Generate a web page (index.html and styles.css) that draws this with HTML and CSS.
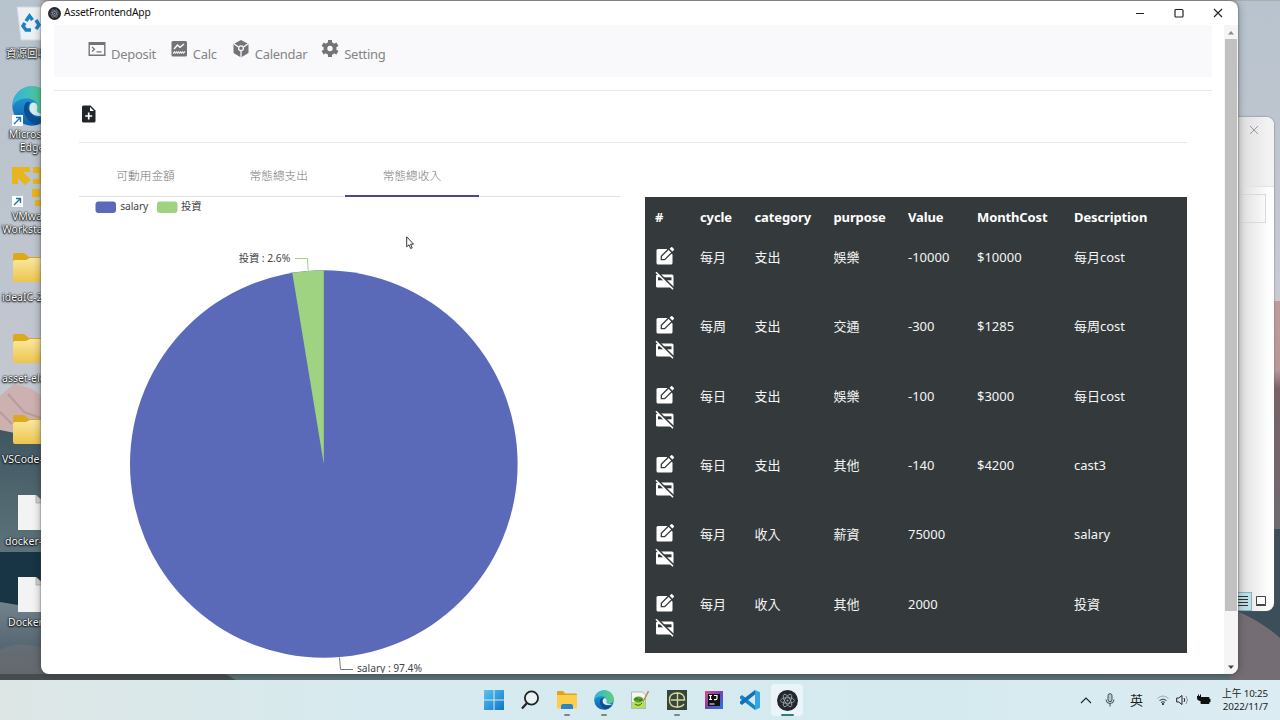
FILE: index.html
```html
<!DOCTYPE html>
<html lang="zh-Hant">
<head>
  <meta charset="UTF-8">
  <meta name="viewport" content="width=device-width, initial-scale=1.0">
  <title>AssetFrontendApp</title>
  <link rel="stylesheet" href="styles.css">
</head>
<body>
  <!-- shared icons -->
  <svg class="defs" width="0" height="0">
    <defs>
      <linearGradient id="folderFill" x1="0" y1="0" x2="0" y2="1"><stop offset="0" stop-color="#fbe7a0"/><stop offset="1" stop-color="#ecc54b"/></linearGradient>
      <linearGradient id="edgeBlue" x1="0" y1="0" x2="0" y2="1"><stop offset="0" stop-color="#2aa6dc"/><stop offset="1" stop-color="#0d5fae"/></linearGradient>
      <linearGradient id="edgeGreen" x1="0" y1="0" x2="1" y2="0"><stop offset="0" stop-color="#2fb4dc"/><stop offset="1" stop-color="#5ed07a"/></linearGradient>
      <linearGradient id="winFill" x1="0" y1="0" x2="1" y2="1"><stop offset="0" stop-color="#5bc4f2"/><stop offset="1" stop-color="#1173c6"/></linearGradient>
      <linearGradient id="ijFill" x1="0" y1="0" x2="1" y2="1"><stop offset="0" stop-color="#e84a7d"/><stop offset=".45" stop-color="#7a3fb8"/><stop offset="1" stop-color="#1f7ae0"/></linearGradient>
    </defs>
    <symbol id="edit" viewBox="0 0 20 20">
      <path fill="#fff" d="M3 3h12l2.500 4v10q0 1.500-1.500 1.500H3q-1.500 0-1.500-1.500V4.500Q1.500 3 3 3z"/>
      <path fill="#343a3c" d="M14.300 1 19.500 6.500 17.500 8.500 12 3z"/>
      <path fill="#fff" stroke="#343a3c" stroke-width="1.300" d="M6.300 13.600V10.300L13.600 3 17 6.400 9.700 13.600z"/>
      <path fill="#fff" d="m14.600 2.700 1.500-1.500q.6-.5 1.200 0L18.900 2.900q.5.600 0 1.200L17.400 5.600z"/>
    </symbol>
    <symbol id="card-off" viewBox="0 0 20 20">
      <path fill="#fff" d="M2.500 3.500h14.500q1.500 0 1.500 1.500v10.500q0 1-1 1h-15q-1.500 0-1.500-1.500V5q0-1.500 1.500-1.500z"/>
      <path fill="#343a3c" d="M3 6.300h13.500v3H3z"/>
      <path stroke="#343a3c" stroke-width="1.800" d="M2.500.800 19.800 18"/>
      <path stroke="#fff" stroke-width="1.600" d="M1 1.300 18 18.300"/>
    </symbol>
    <symbol id="folder" viewBox="0 0 36 29">
      <path fill="#dca91c" d="M0 2q0-2 2-2h9l5 4h18q2 0 2 2v10H0z"/>
      <path fill="url(#folderFill)" d="M0 9q0-2 2-2h11l4-2h17q2 0 2 2v20q0 2-2 2H2q-2 0-2-2z"/>
    </symbol>
    <symbol id="edge" viewBox="0 0 24 24">
      <circle cx="12" cy="12" r="11.800" fill="url(#edgeBlue)"/>
      <path fill="url(#edgeGreen)" d="M1 8C4 1 10 0 13 .200c7 .600 11 6 10.800 11.300-.3 4-4 5.500-7.600 4.900-2-.4-1.800-1.400-1.200-2.600C16 9 12 7.500 9 7.500 5 7.400 2 9 .500 12z"/>
      <path fill="#0c4f91" d="M9 9.500c-3.500 3-2 11 5 13.800 3-.5 6-2 8-5.300-4 2-9 1-11-2-1.400-2-1.500-4.500 0-6.400z"/>
      <path fill="#d9ecf0" d="M14.500 10.500c-3-2-5 2-3.500 5 2 3 7 3.300 11.700 1-3 .6-6 .3-7.300-.8-1.200-1.200.8-2.500-.9-5.200z"/>
    </symbol>
    <symbol id="electron" viewBox="0 0 24 24">
      <circle cx="12" cy="12" r="12" fill="#25272e"/>
      <g fill="none" stroke="#9aa6ad" stroke-width="1">
        <ellipse cx="12" cy="12" rx="8" ry="3.200"/>
        <ellipse cx="12" cy="12" rx="8" ry="3.200" transform="rotate(60 12 12)"/>
        <ellipse cx="12" cy="12" rx="8" ry="3.200" transform="rotate(120 12 12)"/>
      </g>
      <circle cx="12" cy="12" r="1.200" fill="#9aa6ad"/>
    </symbol>
    <symbol id="shortcut" viewBox="0 0 11 11">
      <path fill="#fff" d="M0 0h11v11H0z"/>
      <path fill="none" stroke="#1d75ad" stroke-width="1.400" d="m2 9 6-6M4 2.500h4.500V7"/>
    </symbol>
    <symbol id="page" viewBox="0 0 28 35">
      <path fill="#f3f3f3" d="M0 0h18l10 10v25H0z"/>
      <path fill="#d4d4d4" stroke="#999" stroke-width=".6" d="M18 0v8h9z"/>
    </symbol>
  </svg>

  <div class="desktop">
    <svg class="wallpaper" viewBox="0 0 1280 720" preserveAspectRatio="none">
      <defs>
        <linearGradient id="sky" x1="0" y1="0" x2="0" y2="1"><stop offset="0" stop-color="#b7c3cd"/><stop offset=".6" stop-color="#c1c6cf"/><stop offset="1" stop-color="#c9ccd3"/></linearGradient>
        <linearGradient id="rock" x1="0" y1="0" x2="0" y2="1"><stop offset="0" stop-color="#c09b9e"/><stop offset=".3" stop-color="#b79799"/><stop offset=".38" stop-color="#7a6265"/><stop offset="1" stop-color="#6d6a72"/></linearGradient>
        <linearGradient id="sea" x1="0" y1="0" x2="0" y2="1"><stop offset="0" stop-color="#405762"/><stop offset="1" stop-color="#5e757c"/></linearGradient>
        <linearGradient id="shore" x1="0" y1="0" x2="0" y2="1"><stop offset="0" stop-color="#73838b"/><stop offset=".5" stop-color="#596a76"/><stop offset="1" stop-color="#575a5f"/></linearGradient>
      </defs>
      <rect width="1280" height="720" fill="#5c7275"/>
      <rect width="60" height="560" fill="url(#sky)"/>
      <path fill="#cdb0b0" d="M0 396 14 384 30 388 60 408V450H0z"/>
      <path stroke="#b89b9d" stroke-width="2" fill="none" d="M8 394 24 412 41 418M0 412 12 424"/>
      <path fill="url(#sea)" d="M0 430 60 442V560H0z"/>
      <rect y="552" width="60" height="55" fill="#173545"/>
      <path fill="url(#shore)" d="M0 602 18 605 60 603V680H0z"/>
      <path fill="#707377" d="M0 650Q20 638 60 654V680H0z" opacity=".5"/>
      <rect x="1230" width="50" height="310" fill="url(#sky)"/>
      <rect x="1230" y="301" width="50" height="230" fill="url(#rock)"/>
      <rect x="1230" y="529" width="50" height="151" fill="#3c4e59"/>
      <path fill="#746e74" d="M1230 608Q1260 620 1280 638V680H1230z"/>
      <rect width="1280" height="1" x="40" fill="#adadad"/>
      <path fill="#474d4f" d="M0 674H225L236 680H0z"/>
    </svg>

    <!-- desktop shortcuts, partly behind the window -->
    <div class="shortcuts">
      <div class="shortcut bin">
        <svg width="30" height="36" viewBox="0 0 30 36"><path fill="#eef1f3" stroke="#d4d9dd" d="M1 1h28l-4 33H5z"/><path fill="none" stroke="#1b83c9" stroke-width="3.500" d="m10 15 3.500-5 3 4M20 14l3 5-3 4M15 24H10l-3-4 2-3"/></svg>
        <span>資源回收筒</span>
      </div>
      <div class="shortcut ms">
        <svg width="40" height="40"><use href="#edge"/></svg>
        <svg class="arrow" width="11" height="11"><use href="#shortcut"/></svg>
        <span>Microsoft<br>Edge</span>
      </div>
      <div class="shortcut vm">
        <svg width="40" height="40" viewBox="0 0 40 40"><path fill="#e9b51c" d="M0 0h18v5h-7l8 8-6 5-7-7v6H0zM21 0h19v6h-8v11H21v-5h6V6h-6zM20 22h8v8h-8zM23 33h15v6H23z"/></svg>
        <svg class="arrow" width="11" height="11"><use href="#shortcut"/></svg>
        <span>VMware<br>Workstation</span>
      </div>
      <div class="shortcut f1"><svg width="36" height="29"><use href="#folder"/></svg><span>ideaIC-2022</span></div>
      <div class="shortcut f2"><svg width="36" height="29"><use href="#folder"/></svg><span>asset-elec</span></div>
      <div class="shortcut f3"><svg width="36" height="29"><use href="#folder"/></svg><span>VSCode-win</span></div>
      <div class="shortcut p1"><svg width="28" height="35"><use href="#page"/></svg><span>docker-co</span></div>
      <div class="shortcut p2"><svg width="28" height="35"><use href="#page"/></svg><span>Dockerfile</span></div>
    </div>

    <div class="back-window">
      <div class="back-head"><svg width="10" height="10" viewBox="0 0 10 10"><path stroke="#999" d="m1 1 8 8M9 1 1 9"/></svg></div>
      <div class="back-body"><div class="back-field"></div></div>
      <div class="back-views">
        <span class="view-list"><svg width="10" height="10" viewBox="0 0 10 10"><path stroke="#333" d="M0 .500h10M0 3.500h10M0 6.500h10M0 9.500h10"/></svg></span>
        <svg width="10" height="10" viewBox="0 0 10 10"><path fill="#fff" stroke="#444" d="M.500.500h9v8h-9zM0 9.500h10"/></svg>
      </div>
    </div>

    <div class="window">
      <div class="titlebar">
        <svg width="13" height="13"><use href="#electron"/></svg>
        <span class="title">AssetFrontendApp</span>
        <div class="controls">
          <svg width="10" height="10" viewBox="0 0 10 10"><path stroke="#222" d="M1 5.500h8"/></svg>
          <svg width="10" height="10" viewBox="0 0 10 10"><rect x="1" y="1.500" width="8" height="7.500" rx="1" fill="none" stroke="#222" stroke-width="1.200"/></svg>
          <svg width="10" height="10" viewBox="0 0 10 10"><path stroke="#222" stroke-width="1.100" d="m1 1 8 8M9 1 1 9"/></svg>
        </div>
      </div>

      <div class="viewport">
        <div class="page">
          <nav class="navbar">
            <a class="nav-deposit"><svg width="20" height="20" viewBox="0 0 20 20"><path fill="none" stroke="#747476" stroke-width="1.400" d="M2.200 3.700h15.600v12.600H2.200z"/><path fill="#747476" d="M2 3h16v3H2z"/><path fill="none" stroke="#747476" stroke-width="1.300" d="m5 8 2.500 2.300L5 12.600M9.500 12.800h5"/></svg>Deposit</a>
            <a class="nav-calc"><svg width="20" height="20" viewBox="0 0 20 20"><rect x="2.500" y="2" width="15.500" height="15.500" rx="1.500" fill="#747476"/><path fill="none" stroke="#f9f9fc" stroke-width="1.500" d="m5 10 3.500-4 2.500 2.300 4-3.300"/><path fill="none" stroke="#f9f9fc" stroke-width="1.100" d="m4 14.500 2-2m0 2 2-2m0 2 2-2m0 2 2-2m0 2 2-2m0 2 2-2"/></svg>Calc</a>
            <a class="nav-cal"><svg width="20" height="20" viewBox="0 0 20 20"><path fill="#747476" d="m10 1 7.500 4v9L10 18.500 2.500 14V5z"/><path fill="none" stroke="#f9f9fc" stroke-width="1.300" d="M2.500 4.500 7.500 8M17.500 4.500l-5 3.500M10 12v6.500"/><circle cx="10" cy="9.300" r="2.400" fill="#747476" stroke="#f9f9fc" stroke-width="1.300"/></svg>Calendar</a>
            <a class="nav-set"><svg width="20" height="20" viewBox="0 0 20 20"><circle cx="10" cy="9.500" r="4.600" fill="none" stroke="#747476" stroke-width="3.800"/><path stroke="#747476" stroke-width="4" d="M10 1v3.500M10 14.500V18M2.600 5.200l3 1.800M14.400 12l3 1.800M2.600 13.800l3-1.800M14.400 7l3-1.800"/></svg>Setting</a>
          </nav>
          <hr class="rule">
          <main class="content">
            <div class="toolbar">
              <svg width="20" height="20" viewBox="0 0 20 20"><path fill="#212529" d="M4.500 1.500H11.500L16.500 6.500V17q0 1.500-1.500 1.500H4.500Q3 18.500 3 17V3q0-1.500 1.500-1.500z"/><path fill="#fff" d="M11 3v4h4z"/><path stroke="#fff" stroke-width="1.700" d="M9.700 8.500v7M6.200 12h7"/></svg>
            </div>
            <hr class="rule">
            <div class="columns">
              <section class="chart-col">
                <div class="tabs">
                  <div class="tab">可動用金額</div>
                  <div class="tab">常態總支出</div>
                  <div class="tab active">常態總收入</div>
                </div>
                <svg class="chart" width="541" height="476" viewBox="0 0 541 476">
                  <rect x="16.500" y="4.500" width="20.500" height="11.500" rx="3" fill="#5a69b8"/>
                  <text x="41.300" y="13" textLength="28">salary</text>
                  <rect x="78" y="4.500" width="20.500" height="11.500" rx="3" fill="#9fd382"/>
                  <text x="102" y="13">投資</text>
                  <circle cx="244.800" cy="267" r="193.800" fill="#5a69b8"/>
                  <path fill="#9fd382" d="M244.800 267 213.300 75.800A193.800 193.800 0 0 1 244.800 73.200z"/>
                  <path fill="none" stroke="#9fd382" d="M216 61.500H228.500L229.200 74"/>
                  <text x="159.700" y="64.500" textLength="51.500">投資 : 2.6%</text>
                  <path fill="none" stroke="#70777d" d="M260.500 460.500 261.500 472.500H274"/>
                  <text x="278" y="474.500" textLength="65">salary : 97.4%</text>
                </svg>
              </section>

              <table class="assets">
                <thead>
                  <tr><th class="c-icon">#</th><th class="c-cycle">cycle</th><th class="c-cat">category</th><th class="c-purpose">purpose</th><th class="c-value">Value</th><th class="c-cost">MonthCost</th><th>Description</th></tr>
                </thead>
                <tbody>
                  <tr><td><svg><use href="#edit"/></svg><svg><use href="#card-off"/></svg></td><td>每月</td><td>支出</td><td>娛樂</td><td>-10000</td><td>$10000</td><td>每月cost</td></tr>
                  <tr><td><svg><use href="#edit"/></svg><svg><use href="#card-off"/></svg></td><td>每周</td><td>支出</td><td>交通</td><td>-300</td><td>$1285</td><td>每周cost</td></tr>
                  <tr><td><svg><use href="#edit"/></svg><svg><use href="#card-off"/></svg></td><td>每日</td><td>支出</td><td>娛樂</td><td>-100</td><td>$3000</td><td>每日cost</td></tr>
                  <tr><td><svg><use href="#edit"/></svg><svg><use href="#card-off"/></svg></td><td>每日</td><td>支出</td><td>其他</td><td>-140</td><td>$4200</td><td>cast3</td></tr>
                  <tr><td><svg><use href="#edit"/></svg><svg><use href="#card-off"/></svg></td><td>每月</td><td>收入</td><td>薪資</td><td>75000</td><td></td><td>salary</td></tr>
                  <tr><td><svg><use href="#edit"/></svg><svg><use href="#card-off"/></svg></td><td>每月</td><td>收入</td><td>其他</td><td>2000</td><td></td><td>投資</td></tr>
                </tbody>
              </table>
            </div>
          </main>
        </div>
        <div class="scrollbar">
          <svg width="8" height="14" viewBox="0 0 8 14"><path fill="#8a8a8a" d="M1 9.500 4 6l3 3.500z"/></svg>
          <div class="thumb"></div>
          <svg width="8" height="14" viewBox="0 0 8 14"><path fill="#444" d="M1 5.500h6L4 9z"/></svg>
        </div>
      </div>
    </div>

    <svg class="cursor" width="9" height="14" viewBox="0 0 9 14"><path fill="#fff" stroke="#222" stroke-width=".9" d="M.700.800v10l2.300-2 1.700 3.700 1.500-.7L4.600 8.200h3z"/></svg>

    <div class="taskbar">
      <div class="apps">
        <div class="app"><svg width="20" height="20" viewBox="0 0 20 20"><path fill="url(#winFill)" d="M0 0h9.500v9.500H0zM10.500 0H20v9.500h-9.500zM0 10.500h9.500V20H0zM10.500 10.500H20V20h-9.500z"/></svg></div>
        <div class="app"><svg width="20" height="20" viewBox="0 0 20 20"><circle cx="11.500" cy="8" r="6.600" fill="#e9f3f5" stroke="#222" stroke-width="1.800"/><path stroke="#222" stroke-width="2.200" d="m7 13-5 5.500"/></svg></div>
        <div class="app open"><svg width="20" height="20" viewBox="0 0 20 20"><path fill="#dfa31c" d="M0 2q0-1 1-1h5l2 2.500h11q1 0 1 1V12H0z"/><path fill="#fbcf4c" d="M0 5h20v12.500q0 1-1 1H1q-1 0-1-1z"/><path fill="#2a86c8" d="M4 19v-3q0-2 2-2h8q2 0 2 2v3z"/></svg></div>
        <div class="app open"><svg width="20" height="20"><use href="#edge"/></svg></div>
        <div class="app"><svg width="20" height="20" viewBox="0 0 20 20"><path fill="#f5f8f1" stroke="#a5ada0" stroke-width=".8" d="M1.500 2h11l3 3v13.500h-14z"/><path fill="#b5df58" d="M2 12h13v6H2z"/><ellipse cx="8.500" cy="9.500" rx="5" ry="3" fill="#55a32b"/><path fill="none" stroke="#245c15" d="M5 9h3m1 1h3M5 14q4 3 7-1"/><path stroke="#b98e42" stroke-width="1.600" d="m13 12 5.500-11"/></svg></div>
        <div class="app open"><svg width="20" height="20" viewBox="0 0 20 20"><rect width="20" height="20" fill="#35463d"/><path fill="none" stroke="#d9d397" stroke-width="1.400" d="M10.500 2v16M10 3Q2.500 3 2.500 10T10 17M10.500 3q7 0 7 7H4M10.500 17q4.500 0 6.500-3"/></svg></div>
        <div class="app"><svg width="20" height="20" viewBox="0 0 20 20"><path fill="url(#ijFill)" d="M1 1h18v18H1z"/><path fill="#111" d="M4 4h12v12H4z"/><path fill="none" stroke="#fff" stroke-width="1.200" d="M5 5.500h3M6.500 5.500v4M5 9.500h3M10 5.500h3v3q0 1.200-1.500 1.200H10M5.500 14h5"/></svg></div>
        <div class="app"><svg width="20" height="20" viewBox="0 0 20 20"><path fill="#1684c7" d="M0 6.500 2 5 15 15.500V20L0 8.500z"/><path fill="#1273b2" d="M0 13.500 2 15 15 4.500V0L0 11.500z"/><path fill="#35a4e4" d="m15 0 5 2.300v15.400L15 20z"/></svg></div>
        <div class="app open current"><svg width="21" height="21"><use href="#electron"/></svg></div>
      </div>
      <div class="tray">
        <svg width="12" height="8" viewBox="0 0 12 8"><path fill="none" stroke="#222" stroke-width="1.100" d="m1 7 5-5 5 5"/></svg>
        <svg class="mic" width="10" height="14" viewBox="0 0 10 14"><rect x="3" y=".7" width="4" height="8" rx="2" fill="#b5c9cd" stroke="#36535a"/><path fill="none" stroke="#36535a" d="M1 6.500q0 4 4 4t4-4M5 10.500v3"/></svg>
        <span class="ime">英</span>
        <svg class="wifi" width="12" height="12" viewBox="0 0 12 12"><path fill="none" stroke="#9aa9ad" d="M.500 4.500q5.500-5 11 0"/><path fill="none" stroke="#333" d="M2.500 6.500q3.500-3 7 0M4 8.500q2-1.700 4 0"/><circle cx="6" cy="10" r="1.100" fill="#222"/></svg>
        <svg class="vol" width="13" height="12" viewBox="0 0 13 12"><path fill="none" stroke="#222" d="M.700 4h2L6 1.500v9L2.700 8h-2zM8 4q1.500 2 0 4"/><path fill="none" stroke="#8a989c" d="M10 2q3 4 0 8"/></svg>
        <svg class="bat" width="14" height="12" viewBox="0 0 14 12"><path fill="#111" d="M4 3h7.500q1 0 1 1v1h1v3h-1v1q0 1-1 1h-7q-1 0-1-1V7Q0 6.500 0 4V2h1V.500h1V2h1V.500h1z"/></svg>
        <div class="clock"><span>上午 10:25</span><span>2022/11/7</span></div>
      </div>
    </div>
  </div>
</body>
</html>
```
FILE: styles.css
```css
body {
  margin: 0;
  font-family: 'Noto Sans', 'Noto Sans CJK TC', sans-serif;
  color: #222;
}
svg {
  display: block;
  flex: none;
}
.defs {
  position: absolute;
}
.desktop {
  position: relative;
  width: 1280px;
  height: 720px;
  overflow: hidden;
}
.wallpaper {
  position: absolute;
  width: 1280px;
  height: 720px;
}

/* desktop icons */
.shortcut {
  position: absolute;
  width: 80px;
  font-size: 10.5px;
  line-height: 13px;
  color: #fff;
  text-shadow: 0 0 2px #000, 0 1px 2px #000, 0 0 1px #000;
  white-space: nowrap;
}
.shortcut span { display: block; }
.arrow {
  position: absolute;
  left: 0;
  top: 29px;
}
.bin { left: 16px; top: 6px; }
.bin span { margin: 5px 0 0 -10px; }
.ms { left: 12px; top: 86px; }
.ms span { margin: 2px 0 0 -7px; width: 54px; text-align: center; }
.vm { left: 12px; top: 167px; }
.vm span { margin: 3px 0 0 -11px; width: 62px; text-align: center; }
.f1 { left: 13px; top: 253px; }
.f2 { left: 13px; top: 334px; }
.f3 { left: 13px; top: 415px; }
.f1 span, .f2 span, .f3 span { margin: 9px 0 0 -11px; }
.p1 { left: 18px; top: 495px; }
.p2 { left: 18px; top: 577px; }
.p1 span { margin: 5px 0 0 -13px; }
.p2 span { margin: 4px 0 0 -10px; }

/* window behind */
.back-window {
  position: absolute;
  left: 1100px;
  top: 117px;
  width: 174px;
  height: 494px;
  display: flex;
  flex-direction: column;
  border-radius: 8px;
  overflow: hidden;
  background: linear-gradient(to right, #fff 138px, #dcdcdc 138px, #fdfdfd 168px);
  box-shadow: 0 0 2px #666;
}
.back-head {
  display: flex;
  justify-content: flex-end;
  height: 70px;
  padding: 8px 15px 0 0;
  box-sizing: border-box;
  background: linear-gradient(to right, #dedede 138px, #f2f2f2 168px);
  border-bottom: 1px solid #e3e3e3;
}
.back-body { flex: 1; padding: 7px 8px; }
.back-field { height: 27px; border: 1px solid #d9d9d9; }
.back-views {
  display: flex;
  align-items: center;
  justify-content: flex-end;
  gap: 4px;
  padding-right: 8px;
  height: 20px;
}
.view-list {
  display: flex;
  align-items: center;
  justify-content: flex-end;
  width: 20px;
  height: 19px;
  padding-right: 3px;
  background: #bfdfe6;
  border: 1px solid #7db4bf;
  box-sizing: border-box;
}

/* app window */
.window {
  position: absolute;
  left: 41px;
  top: 1px;
  width: 1197px;
  height: 673px;
  display: flex;
  flex-direction: column;
  background: #fff;
  border-radius: 8px;
  overflow: hidden;
  box-shadow: 0 0 2px #555, 0 0 8px rgba(0, 0, 0, .35);
}
.titlebar {
  display: flex;
  align-items: center;
  height: 24px;
  padding: 0 15px 0 7px;
  font-size: 10.3px;
  letter-spacing: -.17px;
  line-height: 13px;
  color: #111;
}
.title { margin: -1px 0 0 3px; }
.controls { display: flex; gap: 29px; margin-left: auto; }
.viewport {
  display: flex;
  height: 649px;
}
.page {
  flex: 1;
  padding: 0 12px 0 13px;
}
.navbar {
  display: flex;
  height: 52px;
  padding-left: 33px;
  background: #f9f9fc;
  font-size: 13px;
  letter-spacing: -.3px;
  color: #858585;
}
.navbar a {
  display: flex;
  gap: 4px;
  line-height: 58px;
}
.navbar svg { margin-top: 14px; }
.nav-deposit { margin-right: 13px; }
.nav-calc { margin-right: 14px; }
.nav-cal { margin-right: 13px; }
.rule {
  margin: 0;
  border: 0;
  height: 1px;
  background: #e6e6e6;
}
.page > .rule { margin-top: 13px; }
.content { padding: 0 25px; }
.toolbar {
  height: 51px;
  padding-top: 13px;
  box-sizing: border-box;
}
.columns {
  display: flex;
  gap: 25px;
  margin-right: -1px;
}
.chart-col { width: 541px; flex: none; }
.tabs {
  display: flex;
  height: 54px;
  border-bottom: 1px solid #e0e0e0;
  box-sizing: border-box;
}
.tab {
  width: 133.2px;
  height: 54px;
  box-sizing: border-box;
  line-height: 64px;
  text-align: center;
  font-size: 11.7px;
  font-weight: 300;
  color: #777;
}
.tab.active { border-bottom: 2px solid #454b8f; }
.chart text { font-size: 10.3px; fill: #444; }

.assets {
  width: 542px;
  height: 456px;
  margin-top: 54px;
  table-layout: fixed;
  border-collapse: collapse;
  background: #343a3c;
  color: #f5f5f5;
  font-size: 13px;
  line-height: 20px;
}
.assets th {
  height: 40px;
  padding: 0 0 0 10px;
  text-align: left;
  letter-spacing: -.12px;
  color: #fff;
}
.assets td {
  height: 69.33px;
  padding: 10px 0 0 10px;
  box-sizing: border-box;
  vertical-align: top;
}
.assets td svg { width: 20px; height: 20px; margin: -1px 0 6px; }
.assets td svg + svg { margin-bottom: 0; }
.c-icon { width: 35px; }
.c-cycle { width: 44.5px; }
.c-cat { width: 69px; }
.c-purpose { width: 64.5px; }
.c-value { width: 59px; }
.c-cost { width: 87px; }

.scrollbar {
  display: flex;
  flex-direction: column;
  align-items: center;
  width: 14px;
  background: #f5f5f5;
}
.thumb { width: 12px; height: 572px; background: #c1c1c1; margin-bottom: auto; }
.cursor {
  position: absolute;
  left: 406px;
  top: 236px;
}

/* taskbar */
.taskbar {
  position: absolute;
  left: 0;
  top: 680px;
  width: 1280px;
  height: 40px;
  display: flex;
  background: linear-gradient(to right, #dde6e5, #d6eaef 30%, #d5eaef 75%, #dcecf3);
}
.apps {
  display: flex;
  gap: 4.7px;
  margin-left: 477.5px;
  align-items: center;
}
.app {
  position: relative;
  display: flex;
  align-items: center;
  justify-content: center;
  width: 32px;
  height: 32px;
  border-radius: 4px;
}
.app.open::after {
  content: '';
  position: absolute;
  left: 13px;
  bottom: 0;
  width: 6px;
  height: 2.5px;
  border-radius: 2px;
  background: #7a878b;
}
.app.current { background: #ebf5f9; }
.app.current::after { left: 10px; width: 13px; background: #2d8079; }
.tray {
  display: flex;
  align-items: center;
  margin-left: auto;
  padding-right: 12px;
}
.mic { margin-left: 13px; }
.ime { margin: -2px 14px 0 15px; font-size: 13px; }
.vol { margin-left: 7px; }
.bat { margin-left: 8px; }
.clock {
  display: flex;
  flex-direction: column;
  width: 57px;
  text-align: right;
  font-size: 9.8px;
  letter-spacing: -.15px;
  line-height: 13px;
  white-space: nowrap;
}
```
